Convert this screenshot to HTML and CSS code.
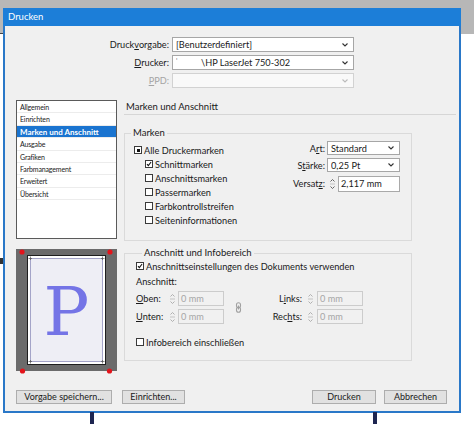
FILE: index.html
```html
<!DOCTYPE html>
<html lang="de">
<head>
<meta charset="utf-8">
<title>Drucken</title>
<link rel="stylesheet" href="styles.css">
</head>
<body>
<div class="desk-bar bar-a"></div>
<div class="desk-bar bar-b"></div>
<div class="desk-edge edge-a"></div>
<div class="desk-edge edge-b"></div>
<div class="dialog">
  <div class="titlebar">Drucken</div>
  <div class="content">
    <div class="topform">
      <span class="lbl">Druck<u>v</u>orgabe:</span>
      <div class="select"><span class="val">[Benutzerdefiniert]</span><svg class="chev" viewBox="0 0 6 4"><polyline points="0.5,0.5 3,3 5.5,0.5"/></svg></div>
      <span class="lbl"><u>D</u>rucker:</span>
      <div class="select"><span class="val"><span class="tick">'</span>\HP LaserJet 750-302</span><svg class="chev" viewBox="0 0 6 4"><polyline points="0.5,0.5 3,3 5.5,0.5"/></svg></div>
      <span class="lbl dis"><u>P</u>PD:</span>
      <div class="select disabled"><span class="val"></span><svg class="chev" viewBox="0 0 6 4"><polyline points="0.5,0.5 3,3 5.5,0.5"/></svg></div>
    </div>

    <div class="middle">
      <div class="leftcol">
        <ul class="list">
          <li>Allgemein</li>
          <li>Einrichten</li>
          <li class="sel">Marken und Anschnitt</li>
          <li>Ausgabe</li>
          <li>Grafiken</li>
          <li>Farbmanagement</li>
          <li>Erweitert</li>
          <li>Übersicht</li>
        </ul>
        <svg class="preview" viewBox="0 0 101 122" width="101" height="122">
          <rect x="0" y="0" width="101" height="122" fill="#6b6b6b"/>
          <rect x="11.5" y="6.5" width="78" height="109" fill="#ffffff" stroke="#1e1e1e" stroke-width="1"/>
          <rect x="14.5" y="9.5" width="72" height="103" fill="#eeeef5" stroke="#a4a4c8" stroke-width="1"/>
          <g stroke="#555" stroke-width="0.7">
            <line x1="12.5" y1="9.5" x2="16" y2="9.5"/><line x1="14.5" y1="7.5" x2="14.5" y2="11"/>
            <line x1="85" y1="9.5" x2="88.5" y2="9.5"/><line x1="86.5" y1="7.5" x2="86.5" y2="11"/>
            <line x1="12.5" y1="112.5" x2="16" y2="112.5"/><line x1="14.5" y1="111" x2="14.5" y2="114.5"/>
            <line x1="85" y1="112.5" x2="88.5" y2="112.5"/><line x1="86.5" y1="111" x2="86.5" y2="114.5"/>
          </g>
          <text x="50.5" y="86" text-anchor="middle" class="bigp">P</text>
          <circle cx="6" cy="3" r="2.6" fill="#e3141b"/>
          <circle cx="94" cy="3" r="2.6" fill="#e3141b"/>
          <circle cx="6.5" cy="122" r="2.6" fill="#e3141b"/>
          <circle cx="93.5" cy="122" r="2.6" fill="#e3141b"/>
        </svg>
      </div>

      <div class="rightcol">
        <div class="panelhead">Marken und Anschnitt</div>

        <div class="group marken">
          <div class="legend">Marken</div>
          <div class="marken-body">
            <div class="checks">
              <div class="chk"><span class="box mixed"></span>Alle Druckermarken</div>
              <div class="chk sub"><span class="box"><svg viewBox="0 0 8 8"><polyline points="1.3,4.2 3.1,6.1 6.8,1.4"/></svg></span>Schnittmarken</div>
              <div class="chk sub"><span class="box"></span>Anschnittsmarken</div>
              <div class="chk sub"><span class="box"></span>Passermarken</div>
              <div class="chk sub"><span class="box"></span>Farbkontrollstreifen</div>
              <div class="chk sub"><span class="box"></span>Seiteninformationen</div>
            </div>
            <div class="fields">
              <span class="flbl">A<u>r</u>t:</span>
              <div class="select small"><span class="val">Standard</span><svg class="chev" viewBox="0 0 6 4"><polyline points="0.5,0.5 3,3 5.5,0.5"/></svg></div>
              <span class="flbl">S<u>t</u>ärke:</span>
              <div class="select small"><span class="val">0,25 Pt</span><svg class="chev" viewBox="0 0 6 4"><polyline points="0.5,0.5 3,3 5.5,0.5"/></svg></div>
              <span class="flbl">Versat<u>z</u>:</span>
              <div class="spinfield">
                <svg class="spin" viewBox="0 0 7 14"><polyline points="1.5,4.5 3.5,2.5 5.5,4.5"/><line x1="1" y1="7" x2="6" y2="7" class="mid"/><polyline points="1.5,9.5 3.5,11.5 5.5,9.5"/></svg>
                <div class="input">2,117 mm</div>
              </div>
            </div>
          </div>
        </div>

        <div class="group bleed">
          <div class="legend">Anschnitt und Infobereich</div>
          <div class="chk"><span class="box"><svg viewBox="0 0 8 8"><polyline points="1.3,4.2 3.1,6.1 6.8,1.4"/></svg></span>Anschnittseinstellungen des Dokuments verwenden</div>
          <div class="subhead">Anschnitt:</div>
          <div class="bleedgrid">
            <span class="blbl"><u>O</u>ben:</span>
            <svg class="spin dim" viewBox="0 0 7 14"><polyline points="1.5,4.5 3.5,2.5 5.5,4.5"/><line x1="1" y1="7" x2="6" y2="7" class="mid"/><polyline points="1.5,9.5 3.5,11.5 5.5,9.5"/></svg>
            <div class="input disabled">0 mm</div>
            <svg class="chain" viewBox="0 0 7 11"><rect x="1.5" y="0.8" width="4" height="5" rx="2" /><rect x="1.5" y="5.2" width="4" height="5" rx="2"/><line x1="3.5" y1="3.5" x2="3.5" y2="7.5"/></svg>
            <span class="blbl right">L<u>i</u>nks:</span>
            <svg class="spin dim" viewBox="0 0 7 14"><polyline points="1.5,4.5 3.5,2.5 5.5,4.5"/><line x1="1" y1="7" x2="6" y2="7" class="mid"/><polyline points="1.5,9.5 3.5,11.5 5.5,9.5"/></svg>
            <div class="input disabled">0 mm</div>

            <span class="blbl"><u>U</u>nten:</span>
            <svg class="spin dim" viewBox="0 0 7 14"><polyline points="1.5,4.5 3.5,2.5 5.5,4.5"/><line x1="1" y1="7" x2="6" y2="7" class="mid"/><polyline points="1.5,9.5 3.5,11.5 5.5,9.5"/></svg>
            <div class="input disabled">0 mm</div>
            <span class="blbl right">Rec<u>h</u>ts:</span>
            <svg class="spin dim" viewBox="0 0 7 14"><polyline points="1.5,4.5 3.5,2.5 5.5,4.5"/><line x1="1" y1="7" x2="6" y2="7" class="mid"/><polyline points="1.5,9.5 3.5,11.5 5.5,9.5"/></svg>
            <div class="input disabled">0 mm</div>
          </div>
          <div class="chk info"><span class="box"></span>Infobereich einschließen</div>
        </div>
      </div>
    </div>

    <div class="buttons">
      <div class="btn b-save">Vorgabe speichern...</div>
      <div class="btn b-setup">Einrichten...</div>
      <div class="btn b-print">Drucken</div>
      <div class="btn b-cancel">Abbrechen</div>
    </div>
  </div>
</div>
</body>
</html>
```

FILE: styles.css
```css
* { box-sizing: border-box; }
html, body { margin: 0; padding: 0; }
body {
  width: 474px;
  height: 424px;
  overflow: hidden;
  position: relative;
  background: linear-gradient(#b7b7b7 0, #b7b7b7 34px, #ffffff 34px);
  font-family: Lato, "Liberation Sans", sans-serif;
  font-size: 9px;
  color: #1a1a1a;
}
u { text-decoration-thickness: 1px; text-underline-offset: 1px; }

.desk-bar { position: absolute; top: 412px; width: 4px; height: 12px; background: #1d2550; }
.bar-a { left: 90px; }
.bar-b { left: 373px; }
.desk-edge { position: absolute; left: 0; width: 3px; }
.edge-a { top: 33px; height: 1px; background: #444; }
.edge-b { top: 258px; height: 6px; background: #333; }

.dialog {
  margin: 8px 0 0 3px;
  width: 458px;
  height: 405px;
  border: 2px solid #2a78c8;
  border-top: 0;
  background: #f0f0f0;
  display: flex;
  flex-direction: column;
}
.titlebar {
  height: 18px;
  margin: 0 -2px;
  padding-left: 5px;
  background: #1c7ed8;
  color: #fff;
  font-size: 9.5px;
  line-height: 18px;
}
.content {
  flex: 1;
  display: flex;
  flex-direction: column;
}

/* top form */
.topform {
  margin-top: 11px;
  display: grid;
  grid-template-columns: 164px 182px;
  grid-auto-rows: 15px;
  column-gap: 3px;
  row-gap: 3px;
  align-items: center;
}
.lbl { text-align: right; font-size: 9.2px; }
.lbl.dis { color: #a4a4a4; }

.select {
  height: 100%;
  background: #fff;
  border: 1px solid #a6a6a6;
  display: flex;
  align-items: center;
  padding: 0 5px 0 3px;
  font-size: 9.2px;
}
.select .val { flex: 1; white-space: nowrap; overflow: hidden; }
.select .tick { display: inline-block; width: 25px; color: #777; font-size: 7px; vertical-align: top; }
.select.disabled { border-color: #d2d2d2; background: #f9f9f9; }
.chev { width: 6px; height: 4px; fill: none; stroke: #333; stroke-width: 1.1; }
.select.disabled .chev { stroke: #bbb; }

/* middle */
.middle {
  margin-top: 12px;
  padding-left: 11px;
  display: flex;
  gap: 7px;
}
.leftcol { width: 101px; display: flex; flex-direction: column; }
.list {
  list-style: none;
  margin: 0;
  padding: 0;
  height: 139px;
  background: #fff;
  border: 1px solid #5a5a5a;
  font-size: 7px;
}
.list li {
  height: 12.4px;
  line-height: 12px;
  padding-left: 3px;
  border-bottom: 1px solid #ececec;
  white-space: nowrap;
  letter-spacing: -0.15px;
}
.list li.sel {
  background: #1a74d0;
  color: #fff;
  font-weight: bold;
  font-size: 8px;
  letter-spacing: 0;
}
.preview { margin-top: 10px; overflow: visible; display: block; }
.bigp { font-family: "DejaVu Serif", "Liberation Serif", serif; font-size: 68px; fill: #7474e6; }

.rightcol { width: 332px; }
.panelhead {
  height: 15px;
  line-height: 13px;
  padding-left: 2px;
  border-bottom: 1px solid #d6d6d6;
  font-size: 9.5px;
}

.group {
  width: 288px;
  border: 1px solid #dadada;
}
.legend {
  width: fit-content;
  margin: -7px 0 0 6px;
  padding: 0 2px;
  background: #f0f0f0;
  line-height: 12px;
  font-size: 9.5px;
}
.marken { margin-top: 18px; padding-bottom: 13px; }
.marken-body { display: flex; justify-content: space-between; }
.checks { padding: 4px 0 0 9px; }

.chk { height: 14px; display: flex; align-items: center; white-space: nowrap; font-size: 9.2px; }
.chk.sub { padding-left: 11px; }
.box {
  width: 8px;
  height: 8px;
  border: 1px solid #3a3a3a;
  background: #fff;
  margin-right: 2px;
  display: flex;
  align-items: center;
  justify-content: center;
  flex: none;
}
.box svg { width: 8px; height: 8px; fill: none; stroke: #111; stroke-width: 1.4; }
.box.mixed::after { content: ""; width: 3px; height: 3px; background: #111; }

.fields {
  margin: 2px 11px 0 0;
  display: grid;
  grid-template-columns: auto 73px;
  grid-template-rows: 14px 14px 16px;
  column-gap: 2px;
  row-gap: 3px;
  align-items: center;
  align-self: flex-start;
}
.fields > :nth-child(5), .fields > :nth-child(6) { margin-top: 1px; }
.flbl { text-align: right; font-size: 9.2px; }
.select.small { padding-left: 3px; }
.spinfield { display: flex; align-items: center; height: 100%; }
.spin { width: 7px; height: 14px; fill: none; stroke: #555; stroke-width: 0.9; flex: none; }
.spin .mid { stroke: #aaa; stroke-width: 0.6; }
.spin.dim { stroke: #a8a8a8; }
.spinfield .spin { margin: 0 2px 0 2px; }
.input {
  flex: 1;
  height: 100%;
  background: #fff;
  border: 1px solid #a9a9a9;
  padding-left: 2px;
  display: flex;
  align-items: center;
  font-size: 9.2px;
}
.input.disabled { background: #f1f1f1; border-color: #cccccc; color: #a6a6a6; }

.bleed { margin-top: 12px; padding: 0 0 11px 11px; }
.subhead { height: 14px; line-height: 14px; margin-top: 2px; font-size: 9.2px; }
.bleedgrid {
  margin-top: 2px;
  display: grid;
  grid-template-columns: 30px 12px 46px 28px 52px 13px 46px;
  grid-template-rows: 15px 15px;
  row-gap: 3px;
  align-items: center;
  color: #1a1a1a;
}
.blbl { font-size: 9.2px; }
.blbl.right { text-align: right; padding-right: 2px; }
.bleedgrid .spin { justify-self: center; }
.bleedgrid .input { height: 15px; }
.chain {
  grid-row: 1 / span 2;
  grid-column: 4;
  justify-self: center;
  width: 7px;
  height: 11px;
  fill: none;
  stroke: #a0a0a0;
  stroke-width: 1.1;
}
.chk.info { margin-top: 11px; }

/* buttons */
.buttons {
  margin-top: auto;
  margin-bottom: 7px;
  padding: 0 12px 0 11px;
  display: flex;
  height: 14px;
}
.btn {
  height: 14px;
  background: #e1e1e1;
  border: 1px solid #adadad;
  font-size: 9px;
  line-height: 12px;
  text-align: center;
  white-space: nowrap;
}
.b-save { width: 96px; }
.b-setup { width: 63px; margin-left: 10px; }
.b-print { width: 64px; margin-left: auto; }
.b-cancel { width: 63px; margin-left: 8px; }
```
